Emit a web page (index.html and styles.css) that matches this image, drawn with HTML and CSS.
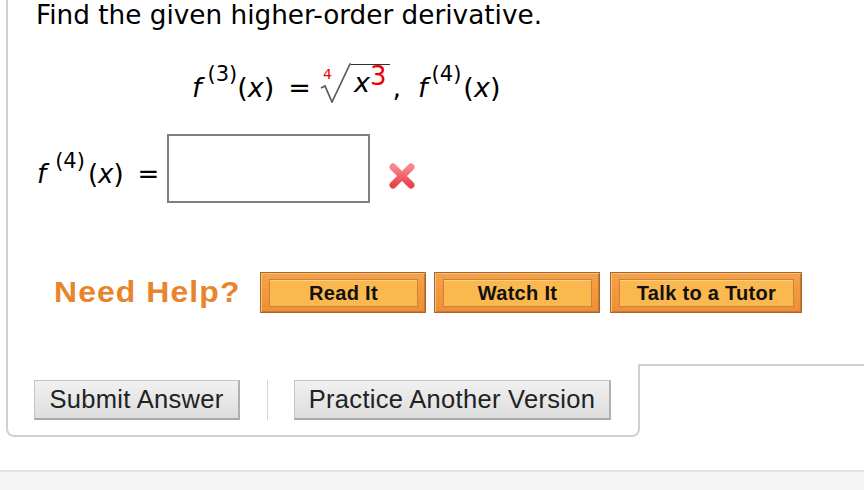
FILE: index.html
```html
<!DOCTYPE html>
<html>
<head>
<meta charset="utf-8">
<link rel="stylesheet" href="styles.css">
</head>
<body>
<div class="page">
  <div class="question">
    <p class="prompt">Find the given higher-order derivative.</p>
    <div class="given">
      <i class="fn">f</i><span class="sup s1">(3)</span><span class="arg">(<i>x</i>)</span>
      <span class="eq">=</span>
      <span class="root">
        <span class="idx">4</span>
        <svg class="rad" width="31" height="40" viewBox="0 0 31 40"><path d="M1 25 L5 23 L12 39 L30 1 L31 1" stroke="#5a5a5a" stroke-width="1.7" fill="none" stroke-linejoin="miter"/></svg>
        <span class="under"><i>x</i><span class="sup red">3</span></span>
      </span>
      <span class="comma">,</span>
      <i class="fn f2">f</i><span class="sup s2">(4)</span><span class="arg a2">(<i>x</i>)</span>
    </div>
    <div class="answer">
      <span class="lbl"><i class="fn">f</i><span class="sup s3">(4)</span><span class="arg a3">(<i>x</i>)</span><span class="eq2">=</span></span>
      <span class="box"></span>
      <svg class="wrong" width="30" height="30" viewBox="0 0 30 30">
        <defs>
          <linearGradient id="rg" x1="0" y1="0" x2="0" y2="1">
            <stop offset="0" stop-color="#f8868a"/>
            <stop offset="1" stop-color="#e8434b"/>
          </linearGradient>
        </defs>
        <path d="M6 6 L24 24 M24 6 L6 24" stroke="url(#rg)" stroke-width="7" stroke-linecap="round" fill="none"/>
      </svg>
    </div>
    <div class="help">
      <span class="need">Need Help?</span>
      <span class="obtn w1"><span class="inner">Read It</span></span>
      <span class="obtn w2"><span class="inner">Watch It</span></span>
      <span class="obtn w3"><span class="inner">Talk to a Tutor</span></span>
    </div>
  </div>
  <div class="bottom">
    <div class="tab">
      <span class="gbtn b1">Submit Answer</span>
      <span class="sep"></span>
      <span class="gbtn b2">Practice Another Version</span>
    </div>
    <div class="rest"></div>
  </div>
  <div class="gap"></div>
  <div class="footer"></div>
</div>
</body>
</html>
```
FILE: styles.css
```css
html, body { margin: 0; padding: 0; background: #fff; }
body { width: 864px; height: 490px; overflow: hidden; font-family: "DejaVu Sans", Verdana, sans-serif; color: #000; }
.page { width: 864px; }

.question {
  margin-left: 6px;
  border-left: 2px solid #d0d0d0;
  padding-left: 28px;
  height: 364px;
  box-sizing: border-box;
}
.prompt { margin: 0; font-size: 26.3px; line-height: 30px; height: 30px; white-space: nowrap; }

i { font-style: italic; }
.sup { font-size: 21px; position: relative; }

.given {
  margin-top: 43px; height: 40px; margin-left: 156px;
  display: flex; align-items: flex-start; font-size: 27px; line-height: 30px; white-space: nowrap;
}
.s1 { top: -14px; margin-left: 6px; }
.s2 { top: -14px; margin-left: 4px; }
.a2 { margin-left: 2px; }
.given .eq { margin-left: 14px; }
.root { display: flex; align-items: flex-start; position: relative; margin-left: 9px; }
.idx { position: absolute; left: 3px; top: -6px; color: #e00; font-size: 14px; line-height: 14px; }
.rad { margin-top: -10px; display: block; }
.under {
  border-top: 1.7px solid #333; margin-top: -9px; padding: 3px 3px 0 3px; line-height: 30px; height: 30px;
}
.under .sup { top: -7px; font-size: 26px; }
.red { color: #e00; }
.comma { margin-left: 3px; }
.f2 { margin-left: 17px; }

.answer { margin-top: 21px; height: 69px; display: flex; align-items: flex-start; font-size: 26px; white-space: nowrap; }
.lbl { display: flex; padding-top: 25px; line-height: 30px; margin-left: 1px; }
.s3 { top: -13px; margin-left: 9px; font-size: 21px; }
.a3 { margin-left: 3px; }
.eq2 { margin-left: 14px; }
.box { margin-left: 8px; width: 203px; height: 69px; box-sizing: border-box; border: 2px solid #808080; background: #fff; }
.wrong { margin-left: 17px; margin-top: 27px; }

.help { display: flex; align-items: center; margin-top: 69px; height: 41px; }
.need {
  font-family: "Liberation Sans", Arial, sans-serif; font-weight: bold; font-size: 29px;
  letter-spacing: 1px; color: #e8842c; margin-left: 18px; width: 206px;
  display: inline-block; transform: scaleX(1.1); transform-origin: left center;
}
.obtn {
  box-sizing: border-box; height: 41px; display: flex; padding: 6px 7px 5px 8px;
  border: 1px solid #a6662c;
  background: linear-gradient(#f5a24a, #ee8f32);
  box-shadow: inset 1px 1px 0 #f8c078, inset -1px -1px 0 #c87830;
  margin-right: 8px;
}
.obtn .inner {
  flex: 1; display: flex; align-items: center; justify-content: center;
  background: #fbb84e; border: 1px solid #c8843c;
  box-shadow: inset 0 1px 0 #fcd080;
  font-family: "Liberation Sans", Arial, sans-serif; font-weight: bold; font-size: 20px;
  letter-spacing: 0.3px; color: #111;
}
.w1 { width: 166px; }
.w2 { width: 166px; margin-right: 10px; }
.w3 { width: 192px; }

.bottom { display: flex; height: 73px; }
.tab {
  box-sizing: border-box; width: 634px; margin-left: 6px;
  border-left: 2px solid #d0d0d0; border-right: 2px solid #d0d0d0; border-bottom: 2px solid #d0d0d0;
  border-radius: 0 0 8px 8px;
  display: flex; align-items: flex-start; padding: 16px 0 0 26px;
}
.rest { flex: 1; border-top: 2px solid #d0d0d0; }
.gbtn {
  box-sizing: border-box; height: 40px; display: flex; align-items: center; justify-content: center;
  background: linear-gradient(#f0f0f0, #dedede);
  border: 1px solid #c4c4c4; border-bottom: 2px solid #a8a8a8; border-right: 2px solid #b0b0b0;
  font-family: "Liberation Sans", Arial, sans-serif; font-size: 25.5px; letter-spacing: 0.3px; color: #222;
}
.b1 { width: 206px; }
.b2 { width: 317px; }
.sep { width: 1px; height: 40px; background: #d4d4d4; margin: 0 26px 0 27px; }

.gap { height: 33px; }
.footer { height: 20px; border-top: 2px solid #e2e2e2; background: #f5f5f5; }
```
